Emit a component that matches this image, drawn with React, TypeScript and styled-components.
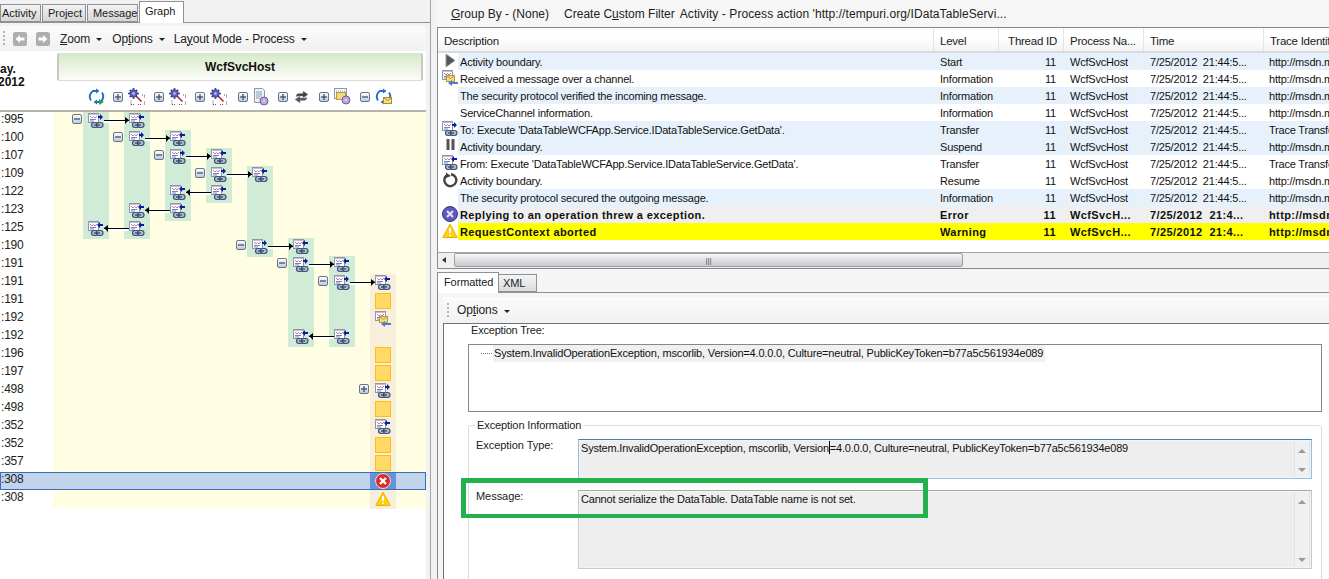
import React from 'react';
import styled, { createGlobalStyle } from 'styled-components';

const GlobalStyle = createGlobalStyle`
  html, body {
    margin: 0;
    width: 1329px;
    height: 579px;
    overflow: hidden;
    background: #fff;
    color: #111;
    font-family: 'Liberation Sans', Arial, sans-serif;
    font-size: 11px;
  }
  * { box-sizing: border-box; }
  u { text-underline-offset: 1px; }
`;

const Page = styled.div`
  position: relative;
  display: flex;
  width: 1329px;
  height: 579px;
  overflow: hidden;
`;

/* ---------- left pane ---------- */

const LeftPane = styled.div`
  width: 431px;
  flex: none;
  display: flex;
  flex-direction: column;
  background: #f2f2f2;
  border-right: 1px solid #a3a3a3;
`;

const SplitGap = styled.div`
  width: 5px;
  flex: none;
  background: #f2f2f2;
`;

const TabStrip = styled.div`
  display: flex;
  align-items: flex-end;
  height: 23px;
  flex: none;
  gap: 1px;
  padding-top: 1px;
  border-bottom: 1px solid #8e9196;
`;

const Tab = styled.div<{ $active?: boolean; $width: number; $indent?: number }>`
  width: ${p => p.$width}px;
  height: ${p => (p.$active ? 22 : 18)}px;
  margin-bottom: ${p => (p.$active ? -1 : 0)}px;
  padding: ${p => (p.$active ? '3px' : '2px')} 0 0 ${p => p.$indent ?? 5}px;
  font-size: 11px;
  letter-spacing: -0.05px;
  color: #222;
  border: 1px solid #8e9196;
  border-bottom: ${p => (p.$active ? 'none' : '1px solid #8e9196')};
  background: ${p => (p.$active ? '#fff' : 'linear-gradient(#f3f3f3, #d6d6d6)')};
`;

const Toolbar = styled.div`
  display: flex;
  align-items: center;
  height: 25px;
  flex: none;
  background: linear-gradient(#fbfbfb, #f1f1f1);
  font-size: 12px;
  letter-spacing: -0.12px;
  color: #222;
  white-space: nowrap;
`;

const GraphToolbar = styled(Toolbar)`
  width: 426px;
  margin-top: 3px;
  padding-left: 3px;
  border-radius: 0 3px 3px 0;
`;

const Gripper = styled.span`
  width: 2px;
  height: 15px;
  flex: none;
  background: repeating-linear-gradient(#b5b5b5 0 2px, transparent 2px 4px);
`;

const NavIcons = styled.span`
  display: flex;
  gap: 9px;
  margin: 0 10px 0 8px;
`;

const MenuItem = styled.span<{ $gap?: number }>`
  display: inline-flex;
  align-items: center;
  margin-right: ${p => p.$gap ?? 0}px;
`;

const Caret = styled.span`
  width: 0;
  height: 0;
  margin: 2px 0 0 6px;
  border-left: 3px solid transparent;
  border-right: 3px solid transparent;
  border-top: 3px solid #222;
`;

const GraphHead = styled.div`
  width: 426px;
  background: #fff;
  flex: none;
`;

const HeadRow = styled.div`
  display: flex;
  height: 32px;
  padding: 2px 3px 2px 0;
`;

const DateCell = styled.div`
  width: 57px;
  flex: none;
  padding-top: 10px;
  font-size: 12px;
  font-weight: 700;
  line-height: 13px;
  overflow-x: clip;
  white-space: nowrap;
`;

const DateLine = styled.div<{ $shift?: number }>`
  margin-left: ${p => p.$shift ?? 0}px;
`;

const HostBox = styled.div`
  flex: 1;
  display: flex;
  align-items: center;
  justify-content: center;
  font-size: 12px;
  font-weight: 700;
  color: #111;
  background: linear-gradient(#d6e9c8, #f1f7ea 70%, #fdfdfb);
  border-left: 2px solid #c9c9c4;
  border-right: 2px solid #c9c9c4;
  border-bottom: 1px solid #dcdcd6;
  border-radius: 2px;
`;

const IconRow = styled.div`
  display: grid;
  grid-template-columns: repeat(8, 41px);
  height: 29px;
  padding-left: 70px;
  border-bottom: 2px solid #b6b3a6;
`;

const IconCell = styled.div`
  display: flex;
  align-items: center;
  justify-content: flex-end;
  gap: 5px;
  padding: 0 6px 0 0;
`;

const Toggle = styled.span<{ $open?: boolean }>`
  position: relative;
  display: block;
  width: 10px;
  height: 10px;
  flex: none;
  border: 1px solid #66758c;
  border-radius: 2px;
  background: linear-gradient(#fdfdfe, #bccbe0);
  &::before {
    content: '';
    position: absolute;
    left: 1px;
    right: 1px;
    top: 3px;
    height: 2px;
    background: #39465a;
    transform: scaleY(0.6);
  }
  &::after {
    content: '';
    display: ${p => (p.$open ? 'none' : 'block')};
    position: absolute;
    top: 1px;
    bottom: 1px;
    left: 3px;
    width: 2px;
    background: #39465a;
    transform: scaleX(0.6);
  }
`;

const Graph = styled.div`
  position: relative;
  display: flex;
  width: 426px;
  height: 396px;
  flex: none;
  background: #fff;
`;

const GraphFoot = styled.div`
  flex: 1;
  width: 426px;
  background: #fff;
`;

const TimeColumn = styled.div`
  position: relative;
  z-index: 2;
  width: 53px;
  flex: none;
`;

const TimeRow = styled.div`
  height: 18px;
  padding-left: 1px;
  font-size: 12px;
  line-height: 15px;
  letter-spacing: -0.2px;
  color: #222;
`;

const Lane = styled.div`
  position: relative;
  flex: 1;
  background: #fffee3;
`;

const Band = styled.div<{ $col: number; $row: number; $rows: number; $tan?: boolean }>`
  position: absolute;
  left: ${p => 30 + 41 * p.$col}px;
  top: ${p => p.$row * 18}px;
  width: 26px;
  height: ${p => p.$rows * 18 + 1}px;
  background: ${p => (p.$tan ? '#f7efdb' : '#d0ebd6')};
`;

const SelectedRow = styled.div`
  position: absolute;
  left: -53px;
  right: 0;
  top: 360px;
  height: 18px;
  background: #c2d4ec;
  border: 1px solid #3a6db5;
`;

const SelectedCell = styled.div`
  position: absolute;
  left: 317px;
  top: 361px;
  width: 26px;
  height: 16px;
  background: #6393db;
`;

const NodeSlot = styled.div<{ $col: number; $row: number }>`
  position: absolute;
  left: ${p => 35 + 41 * p.$col}px;
  top: ${p => p.$row * 18 + 1}px;
  width: 16px;
  height: 16px;
  line-height: 0;
`;

const ToggleSlot = styled.div<{ $col: number; $row: number }>`
  position: absolute;
  left: ${p => 19 + 41 * p.$col}px;
  top: ${p => p.$row * 18 + 2}px;
`;

const EventSquare = styled.div`
  width: 16px;
  height: 16px;
  background: #ffd966;
  border: 1px solid #fdbf10;
`;

const Arrow = styled.div<{ $from: number; $row: number; $left?: boolean }>`
  position: absolute;
  left: ${p => 51 + 41 * p.$from}px;
  top: ${p => p.$row * 18 + 8}px;
  width: 25px;
  height: 1px;
  background: #000;
  box-shadow: 0 1px 0 #fff, 0 2px 0 #fff;
  &::after {
    content: '';
    position: absolute;
    top: -3px;
    ${p => (p.$left ? 'left: 0;' : 'right: 0;')}
    border-top: 3px solid transparent;
    border-bottom: 4px solid transparent;
    ${p => (p.$left ? 'border-right: 4px solid #000;' : 'border-left: 4px solid #000;')}
  }
`;

/* ---------- right pane ---------- */

const RightPane = styled.div`
  flex: 1;
  min-width: 0;
  display: flex;
  flex-direction: column;
  background: #f5f5f5;
`;

const TopBar = styled(Toolbar)`
  height: 27px;
  padding-left: 15px;
  background: #f6f6f6;
  letter-spacing: 0;
  overflow: hidden;
`;

const ActivityLabel = styled(MenuItem)`
  letter-spacing: 0.08px;
`;

const TableFrame = styled.div`
  flex: none;
  height: 242px;
  margin-left: 1px;
  display: flex;
  flex-direction: column;
  background: #fff;
  border-top: 1px solid #85878c;
  border-left: 1px solid #85878c;
  border-bottom: 1px solid #85878c;
`;

const columns = '20px 475px 65px 65px 80px 120px 1fr';

const HeaderRow = styled.div`
  display: grid;
  grid-template-columns: ${columns};
  height: 25px;
  flex: none;
  background: linear-gradient(#fff 40%, #f3f3f3);
  border-bottom: 2px solid #d9dcdf;
`;

const HeaderCell = styled.div<{ $right?: boolean }>`
  padding: 7px 6px 0 6px;
  font-size: 11.5px;
  letter-spacing: -0.25px;
  color: #222;
  text-align: ${p => (p.$right ? 'right' : 'left')};
  border-left: 1px solid #e2e5e8;
  white-space: nowrap;
  overflow: hidden;
`;

const DescHeader = styled(HeaderCell)`
  grid-column: 1 / span 2;
  border-left: none;
`;

const TraceRow = styled.div`
  display: grid;
  grid-template-columns: ${columns};
  height: 17px;
  flex: none;
`;

const Gutter = styled.div`
  background: #fff;
  padding: 0 0 0 4px;
  line-height: 0;
`;

const rowColours: Record<string, string> = {
  blue: '#e6f1fc',
  white: '#fff',
  grey: '#efefef',
  yellow: '#ffff00',
};

const Cell = styled.div<{ $tone: string; $strong?: boolean; $right?: boolean; $pad?: number }>`
  padding: 0 7px 0 ${p => p.$pad ?? 7}px;
  line-height: 18px;
  font-size: 11px;
  letter-spacing: ${p => (p.$strong ? '0.4px' : '-0.2px')};
  font-weight: ${p => (p.$strong ? 700 : 400)};
  color: #111;
  background: ${p => rowColours[p.$tone]};
  text-align: ${p => (p.$right ? 'right' : 'left')};
  white-space: pre;
  overflow: hidden;
`;

const TableSpace = styled.div`
  flex: 1;
`;

const HScroll = styled.div`
  display: flex;
  align-items: flex-start;
  height: 16px;
  flex: none;
  background: #f0f0f0;
  border-top: 1px solid #a5a5a5;
`;

const ScrollArrowLeft = styled.span`
  width: 0;
  height: 0;
  margin: 4px 8px 0 4px;
  border-top: 3px solid transparent;
  border-bottom: 3px solid transparent;
  border-right: 4px solid #333;
`;

const HThumb = styled.div`
  display: flex;
  align-items: center;
  justify-content: center;
  width: 509px;
  height: 14px;
  background: linear-gradient(#f7f7f7, #dfe0e2 50%, #c9cbce);
  border: 1px solid #9a9da2;
  border-radius: 2px;
  font-size: 8px;
  color: #555;
`;

const LowerPane = styled.div`
  flex: 1;
  min-height: 0;
  margin-left: 1px;
  margin-top: 3px;
  display: flex;
  flex-direction: column;
  background: #f5f5f5;
  border-left: 1px solid #85878c;
`;

const LowerTabs = styled.div`
  display: flex;
  align-items: flex-end;
  height: 21px;
  flex: none;
  border-bottom: 1px solid #8e9196;
`;

const LowerTab = styled.div<{ $active?: boolean; $width: number; $indent: number }>`
  width: ${p => p.$width}px;
  height: ${p => (p.$active ? 21 : 18)}px;
  margin-bottom: ${p => (p.$active ? -1 : 0)}px;
  padding: ${p => (p.$active ? 3 : 2)}px 0 0 ${p => p.$indent}px;
  font-size: 11px;
  letter-spacing: -0.1px;
  color: #222;
  background: ${p => (p.$active ? '#fff' : 'linear-gradient(#f4f4f4, #dcdcdc)')};
  border: 1px solid #8e9196;
  border-bottom: ${p => (p.$active ? 'none' : '1px solid #8e9196')};
  border-left: none;
`;

const OptionsBar = styled(Toolbar)`
  margin: 4px 0 0 5px;
  height: 26px;
  padding-left: 4px;
`;

const OptionsLabel = styled(MenuItem)`
  margin-left: 8px;
`;

const DetailPane = styled.div`
  flex: 1;
  min-height: 0;
  margin-left: 5px;
  padding: 0 7px 0 24px;
  background: #fff;
  border-left: 1px solid #6f7175;
  border-top: 1px solid #6f7175;
  overflow: hidden;
`;

const TreeLabel = styled.div`
  margin: 0 0 0 3px;
  height: 20px;
  line-height: 13px;
  font-size: 11px;
  letter-spacing: -0.2px;
  color: #222;
`;

const TreeBox = styled.div`
  height: 68px;
  padding: 0 0 0 12px;
  border: 1px solid #85878c;
  background: #fff;
`;

const TreeLine = styled.div`
  display: flex;
  align-items: center;
  height: 17px;
`;

const TreeDots = styled.span`
  width: 11px;
  height: 1px;
  flex: none;
  margin-right: 1px;
  background: repeating-linear-gradient(90deg, #777 0 1px, transparent 1px 2px);
`;

const TreeText = styled.span`
  width: 552px;
  height: 17px;
  flex: none;
  padding-left: 1px;
  line-height: 17px;
  letter-spacing: -0.17px;
  background: #f0f0f0;
  white-space: nowrap;
`;

const InfoGroup = styled.div`
  position: relative;
  height: 300px;
  margin: 13px 0 0 0;
  padding: 13px 9px 0 7px;
  border: 1px solid #d5dfe5;
  border-radius: 3px;
`;

const GroupTitle = styled.div`
  position: absolute;
  left: 6px;
  top: -7px;
  padding: 0 2px;
  font-size: 11px;
  letter-spacing: -0.1px;
  line-height: 13px;
  color: #222;
  background: #fff;
`;

const FieldRow = styled.div`
  display: grid;
  grid-template-columns: 102px 1fr;
  margin-bottom: 11px;
`;

const FieldLabel = styled.div`
  font-size: 11px;
  line-height: 13px;
  letter-spacing: -0.05px;
  color: #222;
`;

const FieldBox = styled.div<{ $height: number; $focus?: boolean }>`
  position: relative;
  height: ${p => p.$height}px;
  padding: 1px 0 0 2px;
  background: #eeeeee;
  line-height: 15px;
  letter-spacing: -0.2px;
  color: #111;
  white-space: nowrap;
  border: 1px solid ${p => (p.$focus ? '#8fc0e2' : '#c9c9c9')};
  border-top-color: ${p => (p.$focus ? '#3f82b5' : '#a9a9a9')};
  box-shadow: inset 0 0 0 1px #f4f4f4;
`;

const LastField = styled(FieldBox)`
  margin-left: 102px;
`;

const TextCaret = styled.span`
  display: inline-block;
  width: 1px;
  height: 13px;
  background: #000;
  vertical-align: -2px;
`;

const VScroll = styled.div`
  position: absolute;
  top: 1px;
  right: 1px;
  bottom: 1px;
  width: 16px;
  display: flex;
  flex-direction: column;
  justify-content: space-between;
  align-items: center;
  padding: 8px 0 5px;
  background: #f0f0f0;
  border-left: 1px solid #e2e2e2;
  border-right: 1px solid #e2e2e2;
`;

const ScrollUp = styled.span`
  border-left: 4px solid transparent;
  border-right: 4px solid transparent;
  border-bottom: 4px solid #9a9a9a;
`;

const ScrollDown = styled.span`
  border-left: 4px solid transparent;
  border-right: 4px solid transparent;
  border-top: 4px solid #9a9a9a;
`;

const Annotation = styled.div`
  position: absolute;
  left: 461px;
  top: 478px;
  width: 467px;
  height: 40px;
  border: 5px solid #22b14c;
  border-bottom-width: 4px;
`;

/* ---------- icons ---------- */

const Window = () => (
  <>
    <rect x="0.5" y="0.5" width="10" height="9" fill="#fff" stroke="#8d96a8" />
    <path d="M0.5 1.5h10" stroke="#b9c3d6" />
    <path d="M2 3l2 2 1.5-1.5L7 5l2-2" fill="none" stroke="#d8709a" />
    <path d="M2 6.500h6M2 8h4" stroke="#6b86c8" />
  </>
);

const Chain = () => (
  <g fill="#aebdd2" stroke="#3f5275" strokeWidth="1.200">
    <rect x="3.500" y="9.500" width="6.500" height="5" rx="2.400" />
    <rect x="8.500" y="9.500" width="6.500" height="5" rx="2.400" />
    <path d="M6 12h6" stroke="#2d3c58" />
  </g>
);

const NodeIcon = ({ back }: { back?: boolean }) => (
  <svg width="16" height="16" viewBox="0 0 16 16">
    <Window />
    <Chain />
    {back ? (
      <path d="M15 3v2h-3v2L9 4l3-3v2z" fill="#0b1f9e" />
    ) : (
      <path d="M10 3h2V1l3 3-3 3V5h-2z" fill="#0b1f9e" />
    )}
  </svg>
);

const MessageIcon = () => (
  <svg width="16" height="16" viewBox="0 0 16 16">
    <Window />
    <rect x="4.500" y="5.500" width="8" height="6" fill="#f5d97e" stroke="#b99a3c" />
    <path d="M4.500 5.500l4 3 4-3" fill="none" stroke="#b99a3c" />
    <path d="M16 12v2h-6v2l-4-3 4-3v2z" fill="#4a7fd0" />
  </svg>
);

const CycleIcon = ({ envelope }: { envelope?: boolean }) => (
  <svg width="17" height="17" viewBox="0 0 17 17">
    <path d="M3 12.500A6.500 6.500 0 0 1 5 3h4" fill="none" stroke="#1f6fd0" strokeWidth="2" />
    <path d="M8 .5l3.500 2.600L8 5.600z" fill="#1f6fd0" />
    <path d="M14 4.500A6.500 6.500 0 0 1 12 14H8" fill="none" stroke="#1f6fd0" strokeWidth="2" />
    <path d="M9 11.400l-3.500 2.600L9 16.500z" fill="#1f6fd0" />
    {envelope ? (
      <>
        <rect x="8.500" y="9.500" width="8" height="6" fill="#f6dc85" stroke="#a98b32" />
        <path d="M8.500 9.500l4 3 4-3" fill="none" stroke="#a98b32" />
      </>
    ) : (
      <path d="M11 11l5 3-5 3z" fill="#2fa33a" />
    )}
  </svg>
);

const GearIcon = () => (
  <svg width="18" height="18" viewBox="0 0 18 18">
    <path d="M3 16.500h3.500M3 16.500V12M10 16.500h3.500M16.500 16.500V13M16.500 9.500V7H13" fill="none" stroke="#5c5c5c" strokeDasharray="1 1" />
    <path d="M5.500 0v11M0 5.500h11M1.800 1.800l7.400 7.400M9.200 1.800l-7.400 7.400" stroke="#3f4196" strokeWidth="1.700" />
    <circle cx="5.500" cy="5.500" r="3.700" fill="#5f62b8" stroke="#3f4196" />
    <circle cx="5.500" cy="5.500" r="1.200" fill="#c3c6ea" />
    <path d="M9 9l4.500 4.500" stroke="#c01f2e" strokeWidth="1.600" />
  </svg>
);

const DocIcon = () => (
  <svg width="16" height="18" viewBox="0 0 16 18">
    <path d="M1.500.5h8l2 2v12h-10z" fill="#eef0f4" stroke="#8f96a3" />
    <path d="M3 4h6M3 6h6M3 8h6M3 10h4" stroke="#8aa0bd" />
    <circle cx="11" cy="13" r="4" fill="#b7a6e0" stroke="#6f5db0" />
    <circle cx="11" cy="13" r="1.200" fill="#f4e07a" />
  </svg>
);

const SwapIcon = () => (
  <svg width="17" height="14" viewBox="0 0 17 14">
    <path d="M3 6.500C3 4 5 3.500 7 3.500h3V1l5 3.500L10 8V6H7.500C6 6 5 6 3 6.500z" fill="#3f3f3f" stroke="#9a9a9a" strokeWidth="0.500" />
    <path d="M14 7.500c0 2.500-2 3-4 3H7V13L2 9.500 7 6v2h2.500c1.500 0 2.500 0 4.500-.5z" fill="#555" stroke="#9a9a9a" strokeWidth="0.500" />
  </svg>
);

const ScreenDiscIcon = () => (
  <svg width="17" height="17" viewBox="0 0 17 17">
    <rect x="0.500" y="0.500" width="12" height="10" fill="#fff" stroke="#8d96a8" />
    <path d="M2 3h9" stroke="#6b86c8" strokeDasharray="1 1" />
    <rect x="2.500" y="4.500" width="9" height="7" fill="#f5d97e" stroke="#b99a3c" />
    <circle cx="12" cy="12" r="4" fill="#b7a6e0" stroke="#6f5db0" />
    <circle cx="12" cy="12" r="1.200" fill="#f4e07a" />
  </svg>
);

const NavIcon = ({ back }: { back?: boolean }) => (
  <svg width="14" height="14" viewBox="0 0 14 14">
    <rect width="14" height="14" rx="2.500" fill="#aeaeae" />
    {back ? (
      <path d="M2.500 7L7 3v2.500h4.500v3H7V11z" fill="#fff" />
    ) : (
      <path d="M11.500 7L7 3v2.500H2.500v3H7V11z" fill="#fff" />
    )}
  </svg>
);

const ErrorBadge = () => (
  <svg width="16" height="16" viewBox="0 0 16 16">
    <circle cx="8" cy="8" r="7.500" fill="#e02a2a" stroke="#f0d8d8" />
    <path d="M5 5l6 6M11 5l-6 6" stroke="#fff" strokeWidth="2.400" />
  </svg>
);

const WarnIcon = () => (
  <svg width="16" height="16" viewBox="0 0 16 16">
    <path d="M8 1l7.300 13.500H.7z" fill="#ffcf10" stroke="#e8b400" strokeLinejoin="round" />
    <path d="M8 5v5M8 11.500v1.500" stroke="#fff" strokeWidth="1.800" />
  </svg>
);

const PlayIcon = () => (
  <svg width="16" height="16" viewBox="0 0 16 16">
    <path d="M4 1l9 6.500L4 14z" fill="#555" stroke="#999" />
  </svg>
);

const PauseIcon = () => (
  <svg width="16" height="16" viewBox="0 0 16 16">
    <path d="M4.500 1h3v11h-3zM9.500 1h3v11h-3z" fill="#555" />
  </svg>
);

const ResumeIcon = () => (
  <svg width="16" height="16" viewBox="0 0 16 16">
    <path d="M4.500 3.500A6 6 0 1 0 9 2.200" fill="none" stroke="#444" strokeWidth="2.400" />
    <path d="M4 .5v5.500l5-2z" fill="#444" />
  </svg>
);

const FaultIcon = () => (
  <svg width="16" height="16" viewBox="0 0 16 16">
    <circle cx="8" cy="8" r="7.500" fill="#5a5bc0" stroke="#34358c" />
    <path d="M5 5l6 6M11 5l-6 6" stroke="#f2d8ea" strokeWidth="2.200" />
  </svg>
);

/* ---------- data ---------- */

const times = ['995', '100', '107', '109', '122', '123', '125', '190', '191', '191', '191', '192', '192', '196', '197', '498', '498', '352', '352', '357', '308', '308'];

const bands = [
  { col: 0, row: 0, rows: 7 },
  { col: 1, row: 0, rows: 7 },
  { col: 2, row: 1, rows: 5 },
  { col: 3, row: 2, rows: 3 },
  { col: 4, row: 3, rows: 5 },
  { col: 5, row: 7, rows: 6 },
  { col: 6, row: 8, rows: 5 },
];

const nodes = [
  { col: 0, row: 0 }, { col: 1, row: 0, back: true },
  { col: 1, row: 1 }, { col: 2, row: 1, back: true },
  { col: 2, row: 2 }, { col: 3, row: 2, back: true },
  { col: 3, row: 3 }, { col: 4, row: 3, back: true },
  { col: 2, row: 4, back: true }, { col: 3, row: 4, back: true },
  { col: 1, row: 5, back: true }, { col: 2, row: 5, back: true },
  { col: 0, row: 6, back: true }, { col: 1, row: 6, back: true },
  { col: 4, row: 7 }, { col: 5, row: 7, back: true },
  { col: 5, row: 8 }, { col: 6, row: 8, back: true },
  { col: 6, row: 9 }, { col: 7, row: 9, back: true },
  { col: 5, row: 12, back: true }, { col: 6, row: 12, back: true },
  { col: 7, row: 15 }, { col: 7, row: 17, back: true },
];

const squares = [10, 13, 14, 16, 18, 19];

const arrows = [
  { from: 0, row: 0 }, { from: 1, row: 1 }, { from: 2, row: 2 }, { from: 3, row: 3 },
  { from: 2, row: 4, left: true }, { from: 1, row: 5, left: true }, { from: 0, row: 6, left: true },
  { from: 4, row: 7 }, { from: 5, row: 8 }, { from: 6, row: 9 },
  { from: 5, row: 12, left: true },
];

const toggles = [
  { col: 0, row: 0 }, { col: 1, row: 1 }, { col: 2, row: 2 }, { col: 3, row: 3 },
  { col: 4, row: 7 }, { col: 5, row: 8 }, { col: 6, row: 9 },
];

const stamp = '7/25/2012  21:44:5...';
const msdn = 'http://msdn.microsoft.com/en-US/library';
const transfer = 'Trace Transfer';

type Row = {
  icon?: React.ReactNode;
  text: string;
  level: string;
  tone: string;
  trace?: string;
};

const rows: Row[] = [
  { icon: <PlayIcon />, text: 'Activity boundary.', level: 'Start', tone: 'blue' },
  { icon: <MessageIcon />, text: 'Received a message over a channel.', level: 'Information', tone: 'white' },
  { text: 'The security protocol verified the incoming message.', level: 'Information', tone: 'blue' },
  { text: 'ServiceChannel information.', level: 'Information', tone: 'white' },
  { icon: <NodeIcon />, text: "To: Execute 'DataTableWCFApp.Service.IDataTableService.GetData'.", level: 'Transfer', tone: 'blue', trace: transfer },
  { icon: <PauseIcon />, text: 'Activity boundary.', level: 'Suspend', tone: 'blue' },
  { icon: <NodeIcon back />, text: "From: Execute 'DataTableWCFApp.Service.IDataTableService.GetData'.", level: 'Transfer', tone: 'white', trace: transfer },
  { icon: <ResumeIcon />, text: 'Activity boundary.', level: 'Resume', tone: 'white' },
  { text: 'The security protocol secured the outgoing message.', level: 'Information', tone: 'blue' },
  { icon: <FaultIcon />, text: 'Replying to an operation threw a exception.', level: 'Error', tone: 'grey' },
  { icon: <WarnIcon />, text: 'RequestContext aborted', level: 'Warning', tone: 'yellow' },
];

const exceptionName = 'System.InvalidOperationException, mscorlib, Version=4.0.0.0, Culture=neutral, PublicKeyToken=b77a5c561934e089';

const App = () => {
  return (
    <Page>
      <GlobalStyle />
      <LeftPane>
        <TabStrip>
          <Tab $width={41} $indent={1}>Activity</Tab>
          <Tab $width={44}>Project</Tab>
          <Tab $width={51}>Message</Tab>
          <Tab $width={45} $active>Graph</Tab>
        </TabStrip>
        <GraphToolbar>
          <Gripper />
          <NavIcons>
            <NavIcon back />
            <NavIcon />
          </NavIcons>
          <MenuItem $gap={10}><u>Z</u>oom<Caret /></MenuItem>
          <MenuItem $gap={9}>Op<u>t</u>ions<Caret /></MenuItem>
          <MenuItem>La<u>y</u>out Mode - Process<Caret /></MenuItem>
        </GraphToolbar>
        <GraphHead>
          <HeadRow>
            <DateCell>
              <DateLine>ay.</DateLine>
              <DateLine $shift={-2}>2012</DateLine>
            </DateCell>
            <HostBox>WcfSvcHost</HostBox>
          </HeadRow>
          <IconRow>
            <IconCell><CycleIcon /></IconCell>
            <IconCell><Toggle /><GearIcon /></IconCell>
            <IconCell><Toggle /><GearIcon /></IconCell>
            <IconCell><Toggle /><GearIcon /></IconCell>
            <IconCell><Toggle /><DocIcon /></IconCell>
            <IconCell><Toggle /><SwapIcon /></IconCell>
            <IconCell><Toggle /><ScreenDiscIcon /></IconCell>
            <IconCell><Toggle $open /><CycleIcon envelope /></IconCell>
          </IconRow>
        </GraphHead>
        <Graph>
          <TimeColumn>
            {times.map((t, i) => <TimeRow key={i}>:{t}</TimeRow>)}
          </TimeColumn>
          <Lane>
            {bands.map(b => <Band key={b.col} $col={b.col} $row={b.row} $rows={b.rows} />)}
            <Band $col={7} $row={9} $rows={13} $tan />
            <SelectedRow />
            <SelectedCell />
            {arrows.map((a, i) => <Arrow key={i} $from={a.from} $row={a.row} $left={a.left} />)}
            {toggles.map((t, i) => <ToggleSlot key={i} $col={t.col} $row={t.row}><Toggle $open /></ToggleSlot>)}
            <ToggleSlot $col={7} $row={15}><Toggle /></ToggleSlot>
            {nodes.map((n, i) => <NodeSlot key={i} $col={n.col} $row={n.row}><NodeIcon back={n.back} /></NodeSlot>)}
            {squares.map(r => <NodeSlot key={r} $col={7} $row={r}><EventSquare /></NodeSlot>)}
            <NodeSlot $col={7} $row={11}><MessageIcon /></NodeSlot>
            <NodeSlot $col={7} $row={20}><ErrorBadge /></NodeSlot>
            <NodeSlot $col={7} $row={21}><WarnIcon /></NodeSlot>
          </Lane>
        </Graph>
        <GraphFoot />
      </LeftPane>
      <SplitGap />
      <RightPane>
        <TopBar>
          <MenuItem $gap={15}><u>G</u>roup By - (None)</MenuItem>
          <MenuItem $gap={5}>Create C<u>u</u>stom Filter</MenuItem>
          <ActivityLabel>Activity - Process action 'http://tempuri.org/IDataTableServi...</ActivityLabel>
        </TopBar>
        <TableFrame>
          <HeaderRow>
            <DescHeader>Description</DescHeader>
            <HeaderCell>Level</HeaderCell>
            <HeaderCell $right>Thread ID</HeaderCell>
            <HeaderCell>Process Na...</HeaderCell>
            <HeaderCell>Time</HeaderCell>
            <HeaderCell>Trace Identifier</HeaderCell>
          </HeaderRow>
          {rows.map((r, i) => {
            const strong = r.tone === 'grey' || r.tone === 'yellow';
            return (
              <TraceRow key={i}>
                <Gutter>{r.icon}</Gutter>
                <Cell $tone={r.tone} $strong={strong} $pad={2}>{r.text}</Cell>
                <Cell $tone={r.tone} $strong={strong}>{r.level}</Cell>
                <Cell $tone={r.tone} $strong={strong} $right>11</Cell>
                <Cell $tone={r.tone} $strong={strong}>{strong ? 'WcfSvcH...' : 'WcfSvcHost'}</Cell>
                <Cell $tone={r.tone} $strong={strong}>{strong ? '7/25/2012  21:4...' : stamp}</Cell>
                <Cell $tone={r.tone} $strong={strong} $pad={6}>{r.trace ?? msdn}</Cell>
              </TraceRow>
            );
          })}
          <TableSpace />
          <HScroll>
            <ScrollArrowLeft />
            <HThumb>|||</HThumb>
          </HScroll>
        </TableFrame>
        <LowerPane>
          <LowerTabs>
            <LowerTab $width={61} $indent={6} $active>Formatted</LowerTab>
            <LowerTab $width={38} $indent={4}>XML</LowerTab>
          </LowerTabs>
          <OptionsBar>
            <Gripper />
            <OptionsLabel>Op<u>t</u>ions<Caret /></OptionsLabel>
          </OptionsBar>
          <DetailPane>
            <TreeLabel>Exception Tree:</TreeLabel>
            <TreeBox>
              <TreeLine>
                <TreeDots />
                <TreeText>{exceptionName}</TreeText>
              </TreeLine>
            </TreeBox>
            <InfoGroup>
              <GroupTitle>Exception Information</GroupTitle>
              <FieldRow>
                <FieldLabel>Exception Type:</FieldLabel>
                <FieldBox $height={40} $focus>
                  System.InvalidOperationException, mscorlib, Version<TextCaret />=4.0.0.0, Culture=neutral, PublicKeyToken=b77a5c561934e089
                  <VScroll><ScrollUp /><ScrollDown /></VScroll>
                </FieldBox>
              </FieldRow>
              <FieldRow>
                <FieldLabel>Message:</FieldLabel>
                <FieldBox $height={79}>
                  Cannot serialize the DataTable. DataTable name is not set.
                  <VScroll><ScrollUp /><ScrollDown /></VScroll>
                </FieldBox>
              </FieldRow>
              <LastField $height={40} />
            </InfoGroup>
          </DetailPane>
        </LowerPane>
      </RightPane>
      <Annotation />
    </Page>
  );
};

export default App;
